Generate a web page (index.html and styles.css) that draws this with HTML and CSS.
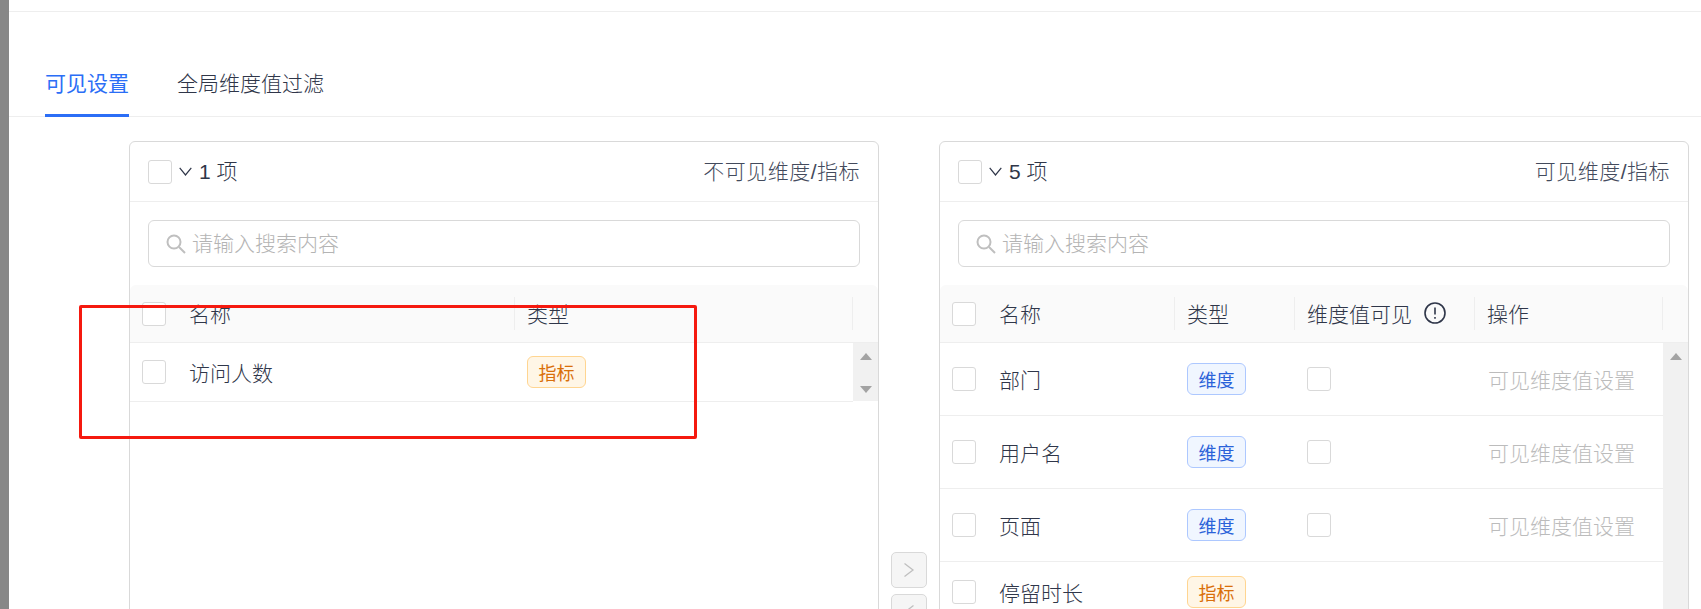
FILE: index.html
```html
<!DOCTYPE html>
<html lang="zh-CN">
	<head>
		<meta charset="UTF-8" />
		<title>可见设置</title>
		<link rel="stylesheet" href="styles.css">
	</head>
	<body>
		<div class="page">
			<div class="side-strip"></div>
			<div class="content">
				<div class="top-bar"></div>

				<div class="tabs">
					<div class="tab active">可见设置</div>
					<div class="tab">全局维度值过滤</div>
				</div>

				<div class="transfer">
					<div class="panel">
						<div class="panel-head">
							<span class="check"></span>
							<svg class="chevron" viewBox="0 0 13 9"><path d="M.7 .8 6.5 8 12.3 .8" /></svg>
							<span class="count">1 项</span>
							<span class="panel-title">不可见维度/指标</span>
						</div>
						<div class="search">
							<svg class="search-icon" viewBox="0 0 20 20"><circle cx="8" cy="8" r="6.5" /><path d="M13 13 19 19" /></svg>
							<input type="text" placeholder="请输入搜索内容" />
						</div>
						<div class="table-head">
							<div class="cell col-sel"><span class="check"></span></div>
							<div class="cell left-name">名称</div>
							<div class="cell left-type">类型</div>
						</div>
						<div class="table-body">
							<div class="rows">
								<div class="row short">
									<div class="cell col-sel"><span class="check"></span></div>
									<div class="cell left-name">访问人数</div>
									<div class="cell left-type"><span class="tag orange">指标</span></div>
								</div>
							</div>
							<div class="scrollbar">
								<span class="arrow-up"></span>
								<span class="arrow-down"></span>
							</div>
						</div>
					</div>

					<div class="move-buttons">
						<button class="move-btn"><svg viewBox="0 0 12 16"><path d="M1.5 1.5 10 8 1.5 14.5" /></svg></button>
						<button class="move-btn"><svg viewBox="0 0 12 16"><path d="M10.5 1.5 2 8 10.5 14.5" /></svg></button>
					</div>

					<div class="panel">
						<div class="panel-head">
							<span class="check"></span>
							<svg class="chevron" viewBox="0 0 13 9"><path d="M.7 .8 6.5 8 12.3 .8" /></svg>
							<span class="count">5 项</span>
							<span class="panel-title">可见维度/指标</span>
						</div>
						<div class="search">
							<svg class="search-icon" viewBox="0 0 20 20"><circle cx="8" cy="8" r="6.5" /><path d="M13 13 19 19" /></svg>
							<input type="text" placeholder="请输入搜索内容" />
						</div>
						<div class="table-head">
							<div class="cell col-sel"><span class="check"></span></div>
							<div class="cell right-name">名称</div>
							<div class="cell right-type">类型</div>
							<div class="cell right-vis">维度值可见
								<svg class="info-icon" viewBox="0 0 22 22">
									<circle cx="11" cy="11" r="10" />
									<path d="M11 5.5V12.5" />
									<path d="M11 15V16.8" />
								</svg>
							</div>
							<div class="cell right-op">操作</div>
						</div>
						<div class="table-body">
							<div class="rows">
								<div class="row tall">
									<div class="cell col-sel"><span class="check"></span></div>
									<div class="cell right-name">部门</div>
									<div class="cell right-type"><span class="tag blue">维度</span></div>
									<div class="cell right-vis"><span class="check"></span></div>
									<div class="cell right-op"><span class="action">可见维度值设置</span></div>
								</div>
								<div class="row tall">
									<div class="cell col-sel"><span class="check"></span></div>
									<div class="cell right-name">用户名</div>
									<div class="cell right-type"><span class="tag blue">维度</span></div>
									<div class="cell right-vis"><span class="check"></span></div>
									<div class="cell right-op"><span class="action">可见维度值设置</span></div>
								</div>
								<div class="row tall">
									<div class="cell col-sel"><span class="check"></span></div>
									<div class="cell right-name">页面</div>
									<div class="cell right-type"><span class="tag blue">维度</span></div>
									<div class="cell right-vis"><span class="check"></span></div>
									<div class="cell right-op"><span class="action">可见维度值设置</span></div>
								</div>
								<div class="row">
									<div class="cell col-sel"><span class="check"></span></div>
									<div class="cell right-name">停留时长</div>
									<div class="cell right-type"><span class="tag orange">指标</span></div>
								</div>
							</div>
							<div class="scrollbar full">
								<span class="arrow-up"></span>
							</div>
						</div>
					</div>
				</div>
			</div>
			<div class="red-mark"></div>
		</div>
	</body>
</html>
```

FILE: styles.css
```css
html,
body {
	margin: 0;
	height: 100%;
	overflow: hidden;
	background: white;
}

body {
	font-family: "Liberation Sans", "Noto Sans CJK SC", sans-serif;
	font-size: 21px;
	font-weight: 300;
	color: #2f3649;
}

.page {
	position: relative;
	display: flex;
	height: 609px;
	overflow: hidden;
}

.side-strip {
	flex: none;
	width: 9px;
	background: #878787;
}

.content {
	flex: 1;
	min-width: 0;
}

.top-bar {
	height: 11px;
	border-bottom: 1px solid #eeeeee;
}

/* tabs */
.tabs {
	display: flex;
	gap: 48px;
	box-sizing: border-box;
	height: 49px;
	margin-top: 56px;
	padding-left: 36px;
	border-bottom: 1px solid #eeeeee;
}

.tab {
	height: 46px;
	line-height: 32px;
	border-bottom: 3px solid transparent;
}

.tab.active {
	font-weight: 400;
	color: #2b6ef6;
	border-bottom-color: #2b6ef6;
}

/* transfer */
.transfer {
	display: flex;
	align-items: center;
	height: 900px;
	margin-top: 24px;
	padding-left: 120px;
}

.panel {
	flex: none;
	box-sizing: border-box;
	width: 750px;
	height: 100%;
	border: 1px solid #d9d9d9;
	border-radius: 6px;
}

.panel-head {
	display: flex;
	align-items: center;
	box-sizing: border-box;
	height: 60px;
	padding: 0 18px;
	border-bottom: 1px solid #eeeeee;
}

.chevron {
	flex: none;
	width: 13px;
	height: 9px;
	margin-left: 7px;
	fill: none;
	stroke: #2f3649;
	stroke-width: 1.2;
}

.count {
	margin-left: 7px;
	padding-bottom: 3px;
}

.panel-title {
	margin-left: auto;
	padding-bottom: 3px;
	letter-spacing: 0.5px;
	color: #434a5c;
}

.check {
	display: block;
	flex: none;
	box-sizing: border-box;
	width: 24px;
	height: 24px;
	background: white;
	border: 1px solid #d9d9d9;
	border-radius: 3px;
}

.search {
	display: flex;
	align-items: center;
	box-sizing: border-box;
	height: 47px;
	margin: 18px 18px;
	padding-left: 17px;
	border: 1px solid #d9d9d9;
	border-radius: 6px;
}

.search-icon {
	flex: none;
	width: 20px;
	height: 20px;
	fill: none;
	stroke: #bfbfbf;
	stroke-width: 2;
}

.search input {
	flex: 1;
	min-width: 0;
	margin-left: 6px;
	padding: 0;
	border: none;
	outline: none;
	font: inherit;
}

.search input::placeholder {
	color: #b4b4b4;
}

/* table */
.table-head {
	display: flex;
	align-items: center;
	box-sizing: border-box;
	height: 58px;
	background: #fafafa;
	border-bottom: 1px solid #eeeeee;
	border-radius: 6px 6px 0 0;
}

.table-head .cell {
	height: 33px;
	padding-bottom: 2px;
	border-right: 1px solid #eeeeee;
}

.table-head .col-sel {
	padding-bottom: 0;
	border-right: none;
}

.cell {
	display: flex;
	align-items: center;
	flex: none;
	box-sizing: border-box;
	padding-left: 12px;
}

.col-sel {
	width: 48px;
}

.left-name {
	width: 337px;
	padding-left: 11px;
}

.left-type {
	width: 338px;
}

.right-name {
	width: 187px;
	padding-left: 11px;
}

.right-type {
	width: 120px;
}

.right-vis {
	width: 180px;
}

.right-op {
	width: 188px;
}

.info-icon {
	flex: none;
	width: 22px;
	height: 22px;
	margin-left: 12px;
	fill: none;
	stroke: #2f3649;
	stroke-width: 1.6;
}

.table-body {
	display: flex;
	align-items: flex-start;
}

.rows {
	flex: 1;
	min-width: 0;
}

.row {
	display: flex;
	align-items: center;
	box-sizing: border-box;
	height: 60px;
	border-bottom: 1px solid #eeeeee;
}

.row.short {
	height: 59px;
}

.row.tall {
	height: 73px;
}

.tag {
	display: flex;
	align-items: center;
	justify-content: center;
	box-sizing: border-box;
	width: 59px;
	height: 32px;
	font-size: 18px;
	font-weight: 400;
	border: 1px solid;
	border-radius: 6px;
}

.tag.blue {
	color: #2a62d9;
	background: #f0f6ff;
	border-color: #adc8ff;
}

.tag.orange {
	color: #d96f0a;
	background: #fff6e6;
	border-color: #ffd591;
}

.action {
	margin-left: 1px;
	color: #bcbcbc;
}

.scrollbar {
	display: flex;
	flex-direction: column;
	align-items: center;
	justify-content: space-between;
	flex: none;
	box-sizing: border-box;
	width: 25px;
	height: 58px;
	padding: 10px 0 8px;
	background: #f1f1f1;
}

.scrollbar.full {
	height: 500px;
}

.arrow-up {
	width: 0;
	height: 0;
	border-left: 6px solid transparent;
	border-right: 6px solid transparent;
	border-bottom: 7px solid #a3a3a3;
}

.arrow-down {
	width: 0;
	height: 0;
	border-left: 6px solid transparent;
	border-right: 6px solid transparent;
	border-top: 7px solid #a3a3a3;
}

/* move buttons */
.move-buttons {
	display: flex;
	flex-direction: column;
	gap: 6px;
	flex: none;
	margin: 0 12px;
}

.move-btn {
	display: flex;
	align-items: center;
	justify-content: center;
	box-sizing: border-box;
	width: 36px;
	height: 36px;
	padding: 0;
	background: #f5f5f5;
	border: 1px solid #d9d9d9;
	border-radius: 5px;
}

.move-btn svg {
	width: 12px;
	height: 16px;
	fill: none;
	stroke: #bfbfbf;
	stroke-width: 1.3;
}

/* hand drawn annotation over the screenshot */
.red-mark {
	position: absolute;
	left: 79px;
	top: 305px;
	box-sizing: border-box;
	width: 618px;
	height: 134px;
	border: 3px solid #f5190f;
	border-radius: 2px;
}
```
